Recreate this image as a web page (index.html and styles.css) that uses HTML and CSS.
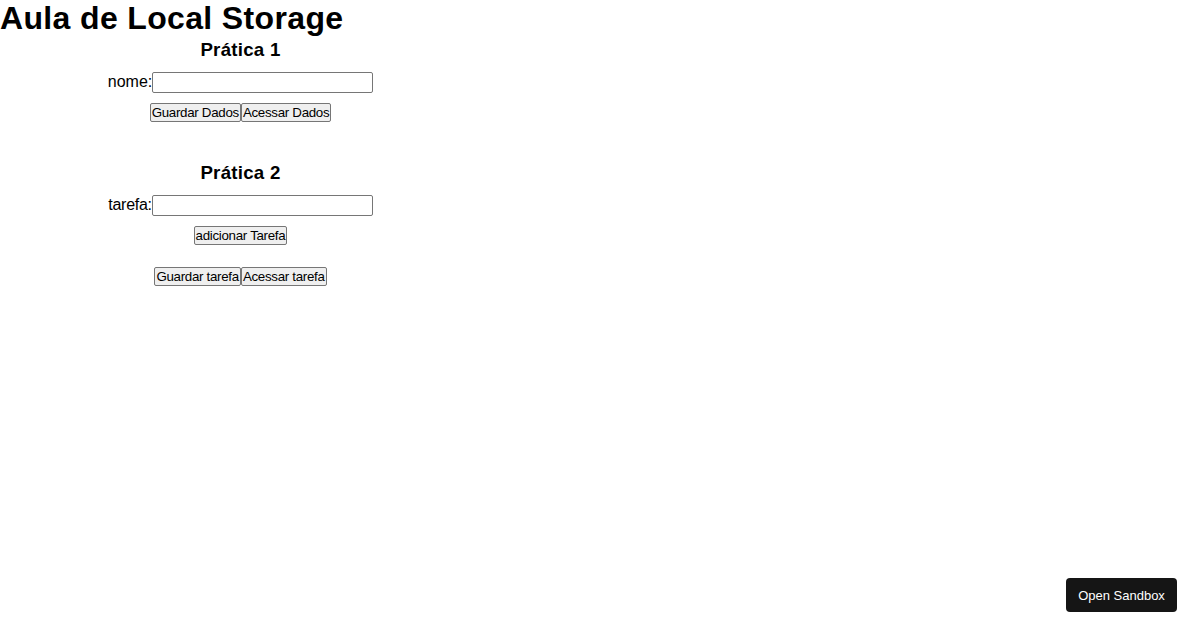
FILE: index.html
```html
<!DOCTYPE html>
<html lang="pt">
<head>
<meta charset="utf-8">
<title>Aula de Local Storage</title>
<link rel="stylesheet" href="styles.css">
</head>
<body>
<h1 class="title">Aula de Local Storage</h1>
<section class="pratica">
  <h3 class="pratica-title">Prática 1</h3>
  <div class="field"><label class="field-label">nome:</label><input class="field-input" type="text"></div>
  <div class="actions"><button class="btn">Guardar Dados</button><button class="btn">Acessar Dados</button></div>
</section>
<section class="pratica pratica-2">
  <h3 class="pratica-title">Prática 2</h3>
  <div class="field"><label class="field-label field-label-tight">tarefa:</label><input class="field-input" type="text"></div>
  <div class="actions"><button class="btn">adicionar Tarefa</button></div>
  <div class="actions actions-wide"><button class="btn">Guardar tarefa</button><button class="btn">Acessar tarefa</button></div>
</section>
<a class="sandbox-btn">Open Sandbox</a>
</body>
</html>
```
FILE: styles.css
```css
html, body {
  margin: 0;
  padding: 0;
  background: #fff;
  color: #000;
  font-family: "Liberation Sans", Arial, sans-serif;
}
.title {
  margin: 0;
  font-size: 32px;
  line-height: 37px;
  font-weight: bold;
  letter-spacing: 0.35px;
}
.pratica {
  width: 481px;
  display: flex;
  flex-direction: column;
  align-items: center;
}
.pratica-2 {
  margin-top: 38px;
}
.pratica-title {
  margin: 0;
  padding-top: 2px;
  font-size: 18.72px;
  line-height: 22px;
  font-weight: bold;
  letter-spacing: 0.25px;
}
.field {
  display: flex;
  align-items: center;
  margin-top: 10px;
  font-size: 16px;
  line-height: 22px;
}
.field-label-tight {
  letter-spacing: -0.3px;
}
.field-input {
  width: 221px;
  height: 21px;
  box-sizing: border-box;
  margin: 0;
  padding: 1px 2px;
  border: 1px solid #767676;
  border-radius: 2px;
  font: 13.33px "Liberation Sans", Arial, sans-serif;
}
.actions {
  display: flex;
  margin-top: 10px;
}
.actions-wide {
  margin-top: 22px;
}
.btn {
  margin: 0;
  height: 19px;
  padding: 0 1px;
  box-sizing: border-box;
  border: 1px solid #767676;
  border-radius: 2px;
  background: #efefef;
  color: #000;
  font: 13.33px "Liberation Sans", Arial, sans-serif;
  line-height: 17px;
  letter-spacing: -0.3px;
}
.sandbox-btn {
  position: fixed;
  right: 23px;
  bottom: 18px;
  width: 111px;
  height: 34px;
  box-sizing: border-box;
  display: flex;
  align-items: center;
  justify-content: center;
  background: #151515;
  color: #fff;
  border-radius: 4px;
  font-size: 13px;
  font-family: "Liberation Sans", Arial, sans-serif;
}
```
